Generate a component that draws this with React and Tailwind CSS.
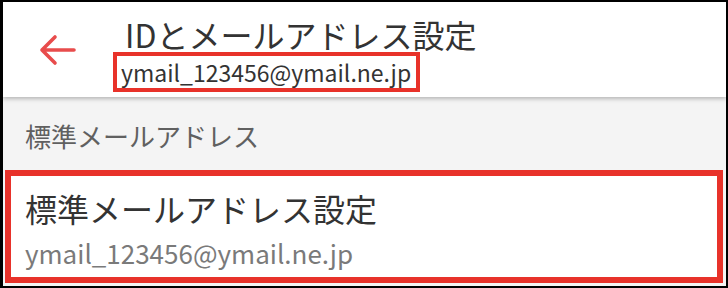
import React from "react";

export default function App() {
  const font = { fontFamily: '"Noto Sans CJK JP", "Noto Sans", sans-serif' };
  return (
    <div className="w-[728px] h-[288px] bg-black pt-[2px] pl-[3px] pr-[2px] pb-[2px]" style={font}>
      <div className="h-full bg-[#f4f4f4] flex flex-col">
        <div className="h-[95px] bg-white flex items-center shadow-[0_2px_4px_rgba(0,0,0,0.25)] relative z-10 shrink-0">
          <div className="w-[110px] pl-[36px] flex items-center">
            <svg width="38" height="32" viewBox="0 0 38 32" fill="none">
              <path d="M3 16 H35 M16 3 L3 16 L16 29" stroke="#e84c4c" strokeWidth="3.6" strokeLinecap="round" strokeLinejoin="round" />
            </svg>
          </div>
          <div className="flex flex-col items-start pt-[8px]">
            <div className="text-[32px] leading-[36px] text-[#333] pl-[12px]">IDとメールアドレス設定</div>
            <div className="border-4 border-[#e8322a] text-[23px] leading-[32px] text-[#333] pl-[4px] pr-[5px]">ymail_123456@ymail.ne.jp</div>
          </div>
        </div>
        <div className="h-[73px] flex items-center pl-[22px] pt-[3px] text-[26px] text-[#606060] shrink-0">標準メールアドレス</div>
        <div className="flex-1 ml-[2px] mr-[3px] mb-[3px] border-[6px] border-[#e8322a] bg-white flex flex-col justify-center pl-[14px] pt-[4px]">
          <div className="text-[32px] leading-[40px] text-[#333]">標準メールアドレス設定</div>
          <div className="text-[26px] leading-[34px] mt-[8px] text-[#7a7a7a]">ymail_123456@ymail.ne.jp</div>
        </div>
      </div>
    </div>
  );
}
